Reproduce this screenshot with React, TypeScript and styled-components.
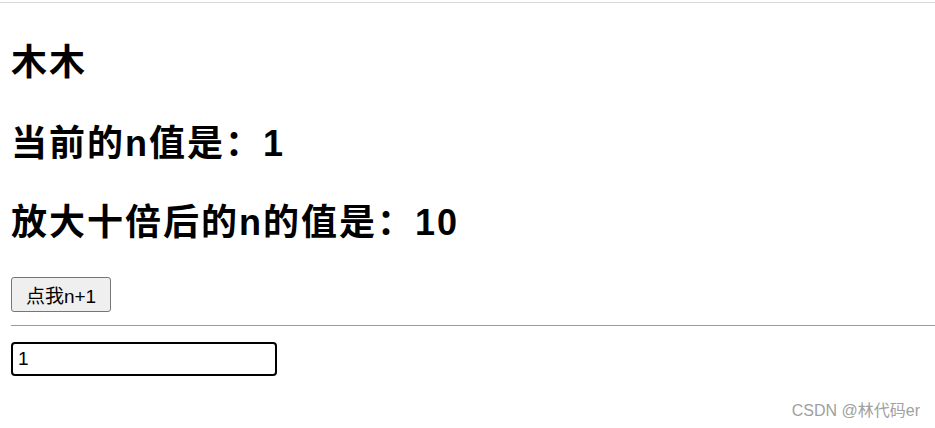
import React, { useState } from 'react'
import styled, { createGlobalStyle } from 'styled-components'

const GlobalStyle = createGlobalStyle`
  html, body {
    margin: 0;
    padding: 0;
    background: #fff;
  }
  body {
    font-family: "Liberation Sans", "Noto Sans CJK SC", sans-serif;
    color: #000;
  }
`

const Page = styled.div`
  position: relative;
  width: 935px;
  height: 428px;
  overflow: hidden;
  border-top: 1px solid #d9d9d9;
  margin-top: 2px;
  box-sizing: border-box;
`

const Content = styled.div`
  padding: 0 0 0 11px;
`

const Title = styled.h2`
  margin: 0;
  padding-top: ${(p: { $gap: number }) => p.$gap}px;
  font-family: "Liberation Sans", "Noto Sans CJK SC", sans-serif;
  font-size: 36px;
  font-weight: 700;
  line-height: 40px;
  letter-spacing: 2px;
`

const Button = styled.button`
  margin-top: 34px;
  display: block;
  width: 100px;
  height: 35px;
  padding: 0;
  font-family: "Liberation Sans", "Noto Sans CJK SC", sans-serif;
  font-size: 19px;
  color: #000;
  background: #efefef;
  border: 1px solid #767676;
  border-radius: 3px;
`

const Rule = styled.hr`
  margin: 13px 0 0 0;
  border: none;
  border-top: 1px solid #9a9a9a;
  height: 0;
`

const Input = styled.input`
  display: block;
  margin-top: 16px;
  width: 266px;
  height: 34px;
  box-sizing: border-box;
  padding: 0 5px;
  font-family: "Liberation Sans", sans-serif;
  font-size: 19px;
  border: 2px solid #000;
  border-radius: 4px;
  outline: none;
  caret-color: #000;
`

const Watermark = styled.div`
  position: absolute;
  right: 15px;
  bottom: 9px;
  font-family: "Liberation Sans", "Noto Sans CJK SC", sans-serif;
  font-size: 16px;
  color: #a0a0a0;
`

export default function App() {
  const [n, setN] = useState(1)
  return (
    <Page>
      <GlobalStyle />
      <Content>
        <Title $gap={40}>木木</Title>
        <Title $gap={41}>当前的n值是：1</Title>
        <Title $gap={39}>放大十倍后的n的值是：{n * 10}</Title>
        <Button onClick={() => setN(n + 1)}>点我n+1</Button>
        <Rule />
        <Input value={String(n)} onChange={(e) => setN(Number(e.target.value) || 0)} autoFocus />
      </Content>
      <Watermark>CSDN @林代码er</Watermark>
    </Page>
  )
}
